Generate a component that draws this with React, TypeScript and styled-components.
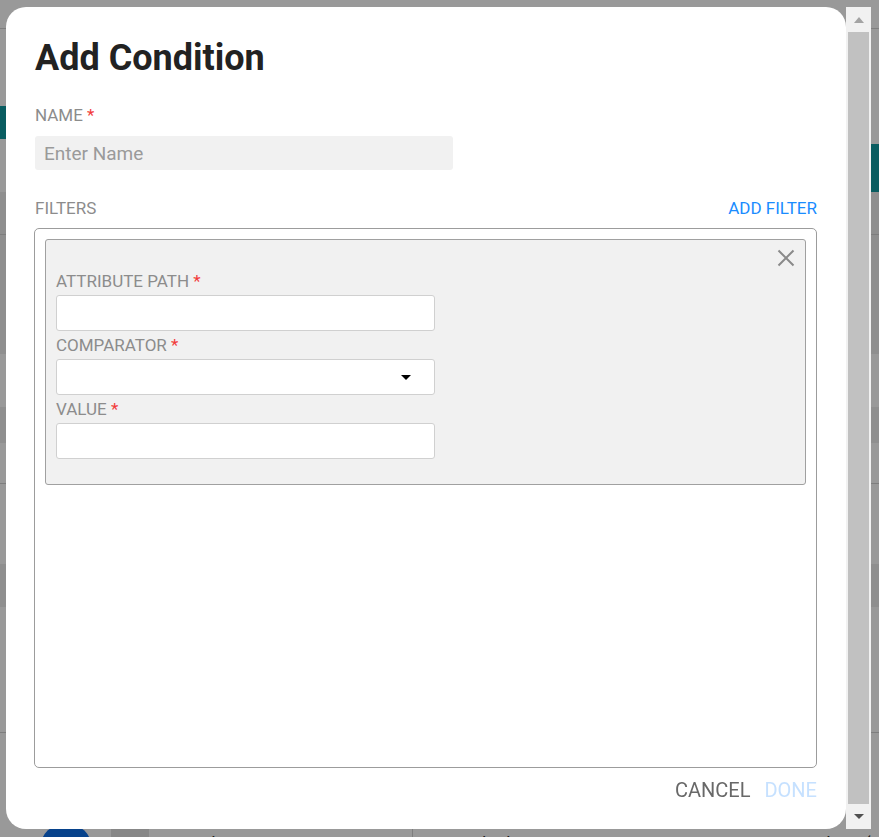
import styled, { createGlobalStyle } from "styled-components";

const GlobalStyle = createGlobalStyle`
  html, body {
    margin: 0;
    padding: 0;
    height: 100%;
  }
  body {
    font-family: Roboto, "Liberation Sans", Arial, sans-serif;
    overflow: hidden;
  }
  #root {
    height: 100%;
  }
  * {
    box-sizing: border-box;
  }
`;

// background page rows below the toolbar (only their edges peek out)
const bands = [
  { h: 43, bg: "#eeeeee", line: true },
  { h: 119, bg: "#eeeeee", line: false },
  { h: 53, bg: "#fff", line: false },
  { h: 36, bg: "#eeeeee", line: false },
  { h: 41, bg: "#fff", line: true },
  { h: 80, bg: "#fff", line: false },
  { h: 43, bg: "#eeeeee", line: false },
  { h: 126, bg: "#fff", line: true },
  { h: 80, bg: "#fff", line: false },
];

function App() {
  return (
    <>
      <GlobalStyle />
      <Backdrop>
        <TopBar />
        <Band $h={77} />
        <Band $h={33}>
          <TealTab />
        </Band>
        <Band $h={53} $end>
          <TealButton />
        </Band>
        {bands.map((b, i) => (
          <Band key={i} $h={b.h} $bg={b.bg} $line={b.line} />
        ))}
        <TableRow>
          <Avatar />
          <GreyCell />
          <NameCell>Delivery</NameCell>
          <StateCell>applied state</StateCell>
          <RuleCell>state equal to : (</RuleCell>
        </TableRow>
      </Backdrop>

      <Overlay>
        <Dialog>
          <Title>Add Condition</Title>
          <NameLabel>
            NAME <Req>*</Req>
          </NameLabel>
          <NameInput placeholder="Enter Name" />

          <FiltersHeader>
            <SectionLabel>FILTERS</SectionLabel>
            <LinkButton>ADD FILTER</LinkButton>
          </FiltersHeader>

          <FilterBox>
            <FilterCard>
              <CardHeader>
                <CloseButton aria-label="Remove filter">
                  <svg width="18" height="18" viewBox="0 0 18 18">
                    <path
                      d="M1.5 1.5 L16.5 16.5 M16.5 1.5 L1.5 16.5"
                      stroke="#8a8a8a"
                      strokeWidth="2"
                      fill="none"
                    />
                  </svg>
                </CloseButton>
              </CardHeader>
              <Field>
                <FieldLabel>
                  ATTRIBUTE PATH <Req>*</Req>
                </FieldLabel>
                <TextInput />
              </Field>
              <Field>
                <FieldLabel>
                  COMPARATOR <Req>*</Req>
                </FieldLabel>
                <SelectBox>
                  <Caret />
                </SelectBox>
              </Field>
              <Field>
                <FieldLabel>
                  VALUE <Req>*</Req>
                </FieldLabel>
                <TextInput />
              </Field>
            </FilterCard>
          </FilterBox>

          <Footer>
            <TextButton $tone="muted">CANCEL</TextButton>
            <TextButton $tone="disabled">DONE</TextButton>
          </Footer>
        </Dialog>

        <ScrollBar>
          <ScrollArrow>
            <UpTriangle />
          </ScrollArrow>
          <ScrollThumb />
          <ScrollArrow>
            <DownTriangle />
          </ScrollArrow>
        </ScrollBar>
      </Overlay>
    </>
  );
}

/* ---------- background page ---------- */

const Backdrop = styled.div`
  height: 100vh;
  display: flex;
  flex-direction: column;
  background: #fff;
  overflow: hidden;
`;

const TopBar = styled.header`
  height: 29px;
  flex-shrink: 0;
  border-bottom: 1px solid #d4d4d4;
`;

const Band = styled.div<{ $h: number; $bg?: string; $line?: boolean; $end?: boolean }>`
  height: ${(p) => p.$h}px;
  flex-shrink: 0;
  display: flex;
  justify-content: ${(p) => (p.$end ? "flex-end" : "flex-start")};
  align-items: flex-end;
  background: ${(p) => p.$bg ?? "#fff"};
  border-bottom: ${(p) => (p.$line ? "1px solid #d2d2d2" : "none")};
`;

const TealTab = styled.div`
  width: 140px;
  height: 100%;
  background: #0f9aa0;
`;

const TealButton = styled.div`
  width: 110px;
  height: 48px;
  background: #0f9aa0;
`;

const TableRow = styled.div`
  display: flex;
  align-items: flex-start;
  height: 60px;
  flex-shrink: 0;
  padding-left: 40px;
  font-size: 18px;
  color: #333;
`;

const Avatar = styled.div`
  width: 52px;
  height: 52px;
  margin-top: 10px;
  border-radius: 50%;
  background: #0d6ee8;
`;

const GreyCell = styled.div`
  width: 38px;
  height: 60px;
  margin-left: 19px;
  background: #e2e2e2;
`;

const NameCell = styled.div`
  width: 264px;
  height: 60px;
  padding: 20px 0 0 41px;
  border-right: 1px solid #d2d2d2;
`;

const StateCell = styled.div`
  width: 329px;
  padding: 20px 0 0 39px;
`;

const RuleCell = styled.div`
  padding-top: 20px;
  white-space: nowrap;
`;

/* ---------- dialog ---------- */

const Overlay = styled.div`
  position: fixed;
  inset: 0;
  display: flex;
  padding: 7px 8px 8px 6px;
  background: rgba(0, 0, 0, 0.4);
`;

const Dialog = styled.div`
  flex: 1;
  display: flex;
  flex-direction: column;
  padding: 30px 29px 27px 29px;
  background: #fff;
  border-radius: 20px;
`;

const Title = styled.h1`
  margin: 0 0 25px;
  font-size: 36px;
  line-height: 1.2;
  font-weight: 700;
  color: #222;
`;

const SectionLabel = styled.div`
  font-size: 17px;
  line-height: 20px;
  color: #8c8c8c;
`;

const NameLabel = styled(SectionLabel)`
  margin-bottom: 11px;
`;

const Req = styled.span`
  color: #f23b3b;
`;

const NameInput = styled.input`
  width: 418px;
  height: 34px;
  padding: 0 9px;
  border: none;
  border-radius: 3px;
  background: #f1f1f1;
  font: inherit;
  font-size: 19px;
  color: #333;
  outline: none;

  &::placeholder {
    color: #9a9a9a;
  }
`;

const FiltersHeader = styled.div`
  display: flex;
  justify-content: space-between;
  align-items: center;
  margin: 28px 0 10px;
`;

const LinkButton = styled.button`
  padding: 0;
  border: none;
  background: none;
  font: inherit;
  font-size: 17px;
  line-height: 20px;
  color: #1a8cff;
  cursor: pointer;
`;

const FilterBox = styled.div`
  flex: 1;
  margin-left: -1px;
  padding: 10px;
  border: 1px solid #9c9c9c;
  border-radius: 5px;
`;

const FilterCard = styled.div`
  display: flex;
  flex-direction: column;
  gap: 4px;
  padding: 9px 10px 25px;
  background: #f1f1f1;
  border: 1px solid #a0a0a0;
  border-radius: 3px;
`;

const CardHeader = styled.div`
  display: flex;
  justify-content: flex-end;
  height: 18px;
`;

const CloseButton = styled.button`
  display: flex;
  padding: 0;
  border: none;
  background: none;
  cursor: pointer;
`;

const Field = styled.div`
  display: flex;
  flex-direction: column;
`;

const FieldLabel = styled(SectionLabel)`
  margin-bottom: 4px;
`;

const TextInput = styled.input`
  width: 379px;
  height: 36px;
  padding: 0 8px;
  border: 1px solid #d0d0d0;
  border-radius: 3px;
  background: #fff;
  font: inherit;
  font-size: 16px;
  outline: none;
`;

const SelectBox = styled.div`
  display: flex;
  justify-content: flex-end;
  align-items: center;
  width: 379px;
  height: 36px;
  padding-right: 23px;
  border: 1px solid #d0d0d0;
  border-radius: 3px;
  background: #fff;
`;

const Caret = styled.span`
  width: 0;
  height: 0;
  border-left: 5px solid transparent;
  border-right: 5px solid transparent;
  border-top: 5px solid #000;
`;

const Footer = styled.div`
  display: flex;
  justify-content: flex-end;
  gap: 14px;
  margin-top: 10px;
`;

const TextButton = styled.button<{ $tone: "muted" | "disabled" }>`
  padding: 0;
  border: none;
  background: none;
  font: inherit;
  font-size: 20px;
  line-height: 24px;
  color: ${(p) => (p.$tone === "muted" ? "#686868" : "#c6e1ff")};
  cursor: pointer;
`;

/* ---------- scrollbar ---------- */

const ScrollBar = styled.div`
  width: 25px;
  display: flex;
  flex-direction: column;
  background: #f1f1f1;
`;

const ScrollArrow = styled.div`
  height: 25px;
  display: flex;
  justify-content: center;
  align-items: center;
`;

const ScrollThumb = styled.div`
  flex: 1;
  margin: 0 2px;
  background: #c1c1c1;
`;

const UpTriangle = styled.span`
  width: 0;
  height: 0;
  border-left: 5.5px solid transparent;
  border-right: 5.5px solid transparent;
  border-bottom: 6px solid #a3a3a3;
`;

const DownTriangle = styled.span`
  width: 0;
  height: 0;
  border-left: 5px solid transparent;
  border-right: 5px solid transparent;
  border-top: 5px solid #505050;
`;

export default App;
